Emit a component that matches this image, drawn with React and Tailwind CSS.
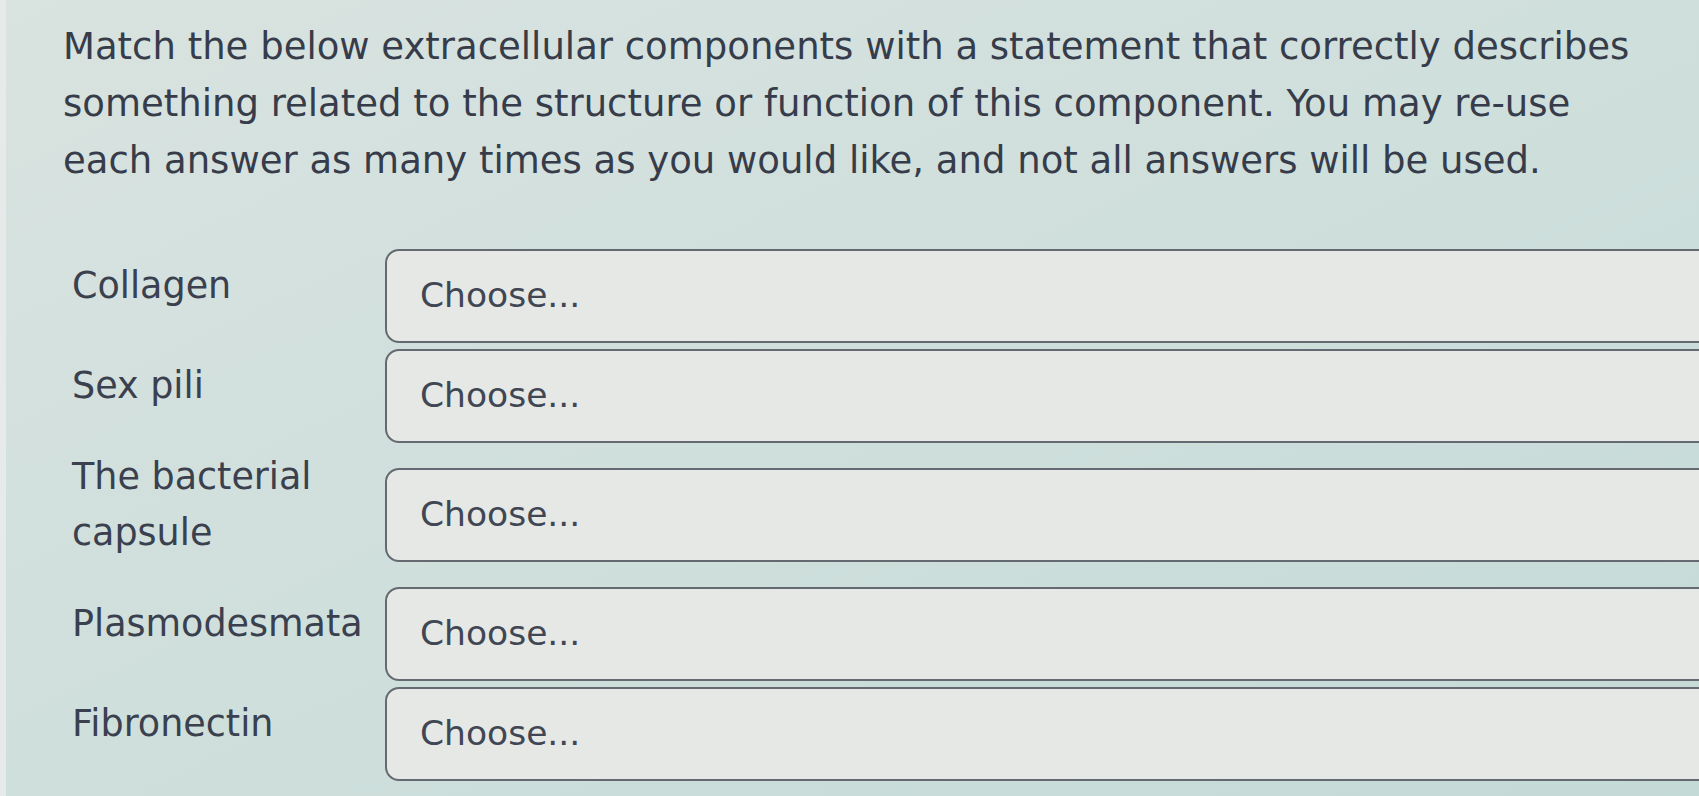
import React from 'react';

const items = [
  { id: 'collagen', label: 'Collagen' },
  { id: 'pili', label: 'Sex pili' },
  { id: 'capsule', label: ['The bacterial', 'capsule'] },
  { id: 'plasmo', label: 'Plasmodesmata' },
  { id: 'fibro', label: 'Fibronectin' },
];

const ChooseBox = () => (
  <div className="w-[1360px] h-[94px] shrink-0 flex items-center pl-[33px] rounded-[14px] border-2 border-[#656a72] bg-[#e5e8e4] text-[34.5px] text-[#404653]">
    Choose...
  </div>
);

const MatchRow = ({ label }) => (
  <div className="flex items-center">
    <div className="w-[313px] shrink-0 pb-[20px] leading-[56px] text-[#3a404e]">
      {Array.isArray(label) ? label.map((l) => <div key={l}>{l}</div>) : label}
    </div>
    <ChooseBox />
  </div>
);

export default function App() {
  return (
    <div className="w-full h-[796px] flex overflow-hidden bg-gradient-to-br from-[#d9e3e0] via-[#cfdfdc] to-[#c4dad7] font-['DejaVu_Sans',sans-serif] text-[36.5px]">
      <div className="w-[6px] shrink-0 bg-[#e6eae8]" />
      <div className="flex-1 pl-[57px] pt-[18px]">
        <p className="w-[1590px] text-[37px] leading-[57px] text-[#363c4a]">
          Match the below extracellular components with a statement that correctly describes something related to the structure or function of this component. You may re-use each answer as many times as you would like, and not all answers will be used.
        </p>
        <div className="mt-[60px] pl-[9px] flex flex-col gap-[6px]">
          {items.map((it) => (
            <MatchRow key={it.id} label={it.label} />
          ))}
        </div>
      </div>
    </div>
  );
}
